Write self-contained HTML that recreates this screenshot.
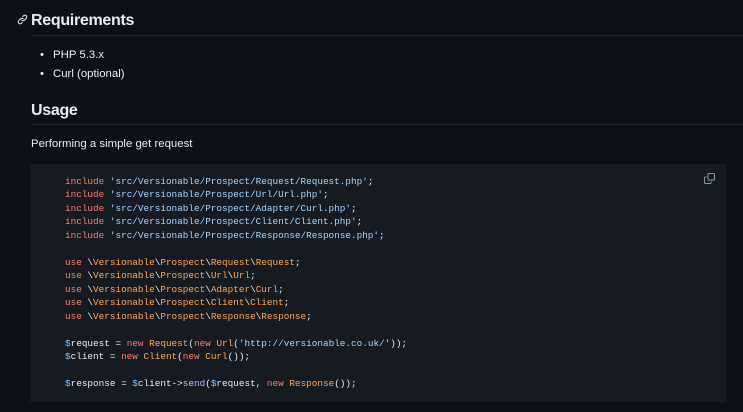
<!DOCTYPE html>
<html><head><meta charset="utf-8"><style>
body{margin:0;background:#0d1117;width:743px;height:412px;overflow:hidden;font-family:"Liberation Sans",sans-serif;color:#e6edf3;position:relative}
.a{position:absolute;white-space:nowrap}
h2{margin:0;font-size:16px;letter-spacing:-0.3px;font-weight:bold;position:absolute;left:31px;line-height:20px}
.hr{position:absolute;left:31px;right:0;height:1px;background:#21262d}
.t{font-size:11.4px;line-height:14px}
.code{position:absolute;left:30px;top:164px;width:696px;height:238px;background:#161b22}
pre{margin:0;position:absolute;left:35px;top:10.5px;font-family:"Liberation Mono",monospace;font-size:9.35px;line-height:13.5px;color:#e6edf3}
.k{color:#ff7b72}.s{color:#a5d6ff}.c{color:#ffa657}.v{color:#79c0ff}.f{color:#d2a8ff}
</style></head><body>
<svg class="a" style="left:17px;top:14px" width="11" height="11" viewBox="0 0 16 16"><path fill="#e6edf3" d="m7.775 3.275 1.25-1.25a3.5 3.5 0 1 1 4.95 4.95l-2.5 2.5a3.5 3.5 0 0 1-4.95 0 .751.751 0 0 1 .018-1.042.751.751 0 0 1 1.042-.018 1.998 1.998 0 0 0 2.83 0l2.5-2.5a2.002 2.002 0 0 0-2.83-2.83l-1.25 1.25a.751.751 0 0 1-1.042-.018.751.751 0 0 1-.018-1.042Zm-4.69 9.64a1.998 1.998 0 0 0 2.83 0l1.25-1.25a.751.751 0 0 1 1.042.018.751.751 0 0 1 .018 1.042l-1.25 1.25a3.5 3.5 0 1 1-4.95-4.95l2.5-2.5a3.5 3.5 0 0 1 4.95 0 .751.751 0 0 1-.018 1.042.751.751 0 0 1-1.042.018 1.998 1.998 0 0 0-2.83 0l-2.5 2.5a1.998 1.998 0 0 0 0 2.83Z"/></svg>
<h2 style="top:11px">Requirements</h2>
<div class="hr" style="top:35px"></div>
<div class="a t" style="left:40px;top:48px">•</div><div class="a t" style="left:53px;top:48px">PHP 5.3.x</div>
<div class="a t" style="left:40px;top:67px">•</div><div class="a t" style="left:53px;top:67px">Curl (optional)</div>
<h2 style="top:101px">Usage</h2>
<div class="hr" style="top:124px"></div>
<div class="a t" style="left:31px;top:137px">Performing a simple get request</div>
<div class="code">
<svg class="a" style="left:674px;top:9px" width="11" height="11" viewBox="0 0 16 16"><path fill="#8b949e" d="M0 6.75C0 5.784.784 5 1.75 5h1.5a.75.75 0 0 1 0 1.5h-1.5a.25.25 0 0 0-.25.25v7.5c0 .138.112.25.25.25h7.5a.25.25 0 0 0 .25-.25v-1.5a.75.75 0 0 1 1.5 0v1.5A1.75 1.75 0 0 1 9.25 16h-7.5A1.75 1.75 0 0 1 0 14.25Z"/><path fill="#8b949e" d="M5 1.75C5 .784 5.784 0 6.75 0h7.5C15.216 0 16 .784 16 1.75v7.5A1.75 1.75 0 0 1 14.25 11h-7.5A1.75 1.75 0 0 1 5 9.25Zm1.75-.25a.25.25 0 0 0-.25.25v7.5c0 .138.112.25.25.25h7.5a.25.25 0 0 0 .25-.25v-7.5a.25.25 0 0 0-.25-.25Z"/></svg>
<pre><span class="k">include</span> <span class="s">'src/Versionable/Prospect/Request/Request.php'</span>;
<span class="k">include</span> <span class="s">'src/Versionable/Prospect/Url/Url.php'</span>;
<span class="k">include</span> <span class="s">'src/Versionable/Prospect/Adapter/Curl.php'</span>;
<span class="k">include</span> <span class="s">'src/Versionable/Prospect/Client/Client.php'</span>;
<span class="k">include</span> <span class="s">'src/Versionable/Prospect/Response/Response.php'</span>;

<span class="k">use</span> \<span class="c">Versionable</span>\<span class="c">Prospect</span>\<span class="c">Request</span>\<span class="c">Request</span>;
<span class="k">use</span> \<span class="c">Versionable</span>\<span class="c">Prospect</span>\<span class="c">Url</span>\<span class="c">Url</span>;
<span class="k">use</span> \<span class="c">Versionable</span>\<span class="c">Prospect</span>\<span class="c">Adapter</span>\<span class="c">Curl</span>;
<span class="k">use</span> \<span class="c">Versionable</span>\<span class="c">Prospect</span>\<span class="c">Client</span>\<span class="c">Client</span>;
<span class="k">use</span> \<span class="c">Versionable</span>\<span class="c">Prospect</span>\<span class="c">Response</span>\<span class="c">Response</span>;

<span class="v">$</span>request = <span class="k">new</span> <span class="c">Request</span>(<span class="k">new</span> <span class="c">Url</span>(<span class="s">'http://versionable.co.uk/'</span>));
<span class="v">$</span>client = <span class="k">new</span> <span class="c">Client</span>(<span class="k">new</span> <span class="c">Curl</span>());

<span class="v">$</span>response = <span class="v">$</span>client-&gt;<span class="f">send</span>(<span class="v">$</span>request, <span class="k">new</span> <span class="c">Response</span>());</pre>
</div>
</body></html>
